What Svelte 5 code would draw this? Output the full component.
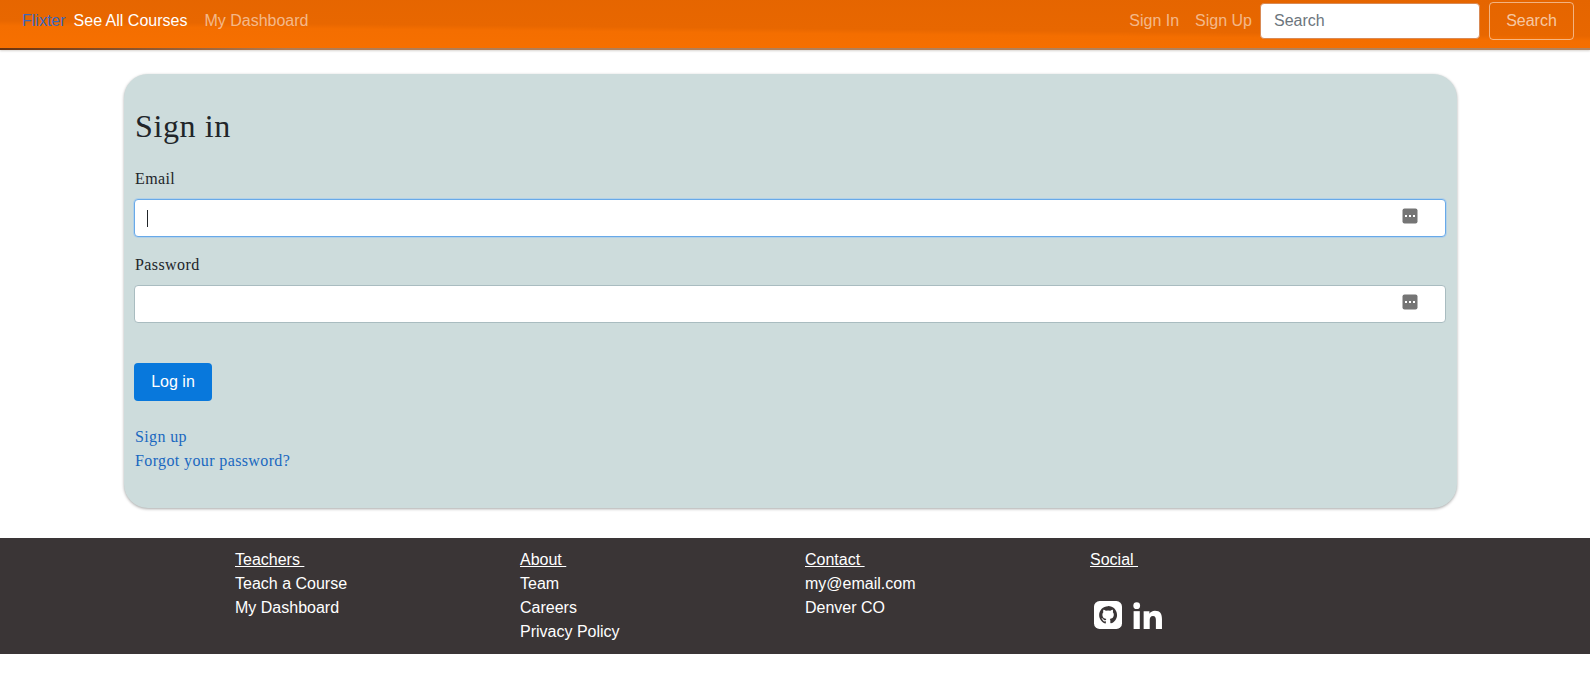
<script lang="ts">
	/**
	 * Flixter sign-in page: orange nav bar, sign-in card, dark footer.
	 */
	const footerColumns = [
		{ title: 'Teachers', links: ['Teach a Course', 'My Dashboard'] },
		{ title: 'About', links: ['Team', 'Careers', 'Privacy Policy'] },
		{ title: 'Contact', links: ['my@email.com', 'Denver CO'] }
	];
</script>

<nav class="navbar">
	<div class="nav-left">
		<a class="brand" href="#top">Flixter</a>
		<a class="nav-link active" href="#top">See All Courses</a>
		<a class="nav-link" href="#top">My Dashboard</a>
	</div>
	<div class="nav-right">
		<a class="nav-link" href="#top">Sign In</a>
		<a class="nav-link" href="#top">Sign Up</a>
		<input class="search-input" type="text" placeholder="Search" />
		<button class="search-btn">Search</button>
	</div>
</nav>

<main class="card">
	<h2>Sign in</h2>
	<label for="email">Email</label>
	<div class="field focused">
		<span class="caret"></span>
		<svg class="key" viewBox="0 0 16 16" aria-hidden="true">
			<rect x="0.500" y="0.500" width="15" height="15" rx="2" fill="#757575" />
			<rect x="3" y="7" width="2" height="2" fill="#fff" />
			<rect x="7" y="7" width="2" height="2" fill="#fff" />
			<rect x="11" y="7" width="2" height="2" fill="#fff" />
		</svg>
		<input id="email" type="text" />
	</div>
	<label for="password">Password</label>
	<div class="field">
		<svg class="key" viewBox="0 0 16 16" aria-hidden="true">
			<rect x="0.500" y="0.500" width="15" height="15" rx="2" fill="#757575" />
			<rect x="3" y="7" width="2" height="2" fill="#fff" />
			<rect x="7" y="7" width="2" height="2" fill="#fff" />
			<rect x="11" y="7" width="2" height="2" fill="#fff" />
		</svg>
		<input id="password" type="text" />
	</div>
	<button class="login">Log in</button>
	<div class="links">
		<a href="#top">Sign up</a>
		<a href="#top">Forgot your password?</a>
	</div>
</main>

<footer class="footer">
	<div class="footer-inner">
		{#each footerColumns as col}
			<div class="footer-col">
				<div class="footer-title">{col.title}&nbsp;</div>
				{#each col.links as link}
					<div>{link}</div>
				{/each}
			</div>
		{/each}
		<div class="footer-col">
			<div class="footer-title">Social&nbsp;</div>
			<div class="social">
				<svg class="gh" viewBox="0 0 30 30" aria-hidden="true">
					<rect width="30" height="30" rx="6" fill="#fff" />
					<path
						fill="#3a3536"
						d="M15 5.500c-5.300 0-9.500 4.200-9.500 9.500 0 4.200 2.700 7.800 6.500 9 .5.100.7-.2.7-.5v-1.700c-2.600.6-3.200-1.200-3.200-1.200-.4-1.100-1-1.400-1-1.400-.9-.6.100-.6.100-.6.900.100 1.400 1 1.400 1 .8 1.400 2.200 1 2.700.8.100-.6.300-1 .6-1.200-2.100-.2-4.300-1-4.300-4.700 0-1 .4-1.900 1-2.500-.1-.3-.4-1.200.100-2.500 0 0 .8-.3 2.600 1a9 9 0 0 1 4.800 0c1.800-1.300 2.600-1 2.600-1 .5 1.300.2 2.200.1 2.500.6.600 1 1.500 1 2.500 0 3.700-2.200 4.500-4.300 4.700.3.300.6.800.6 1.700v2.500c0 .3.200.6.700.5 3.800-1.200 6.500-4.800 6.500-9 0-5.300-4.200-9.500-9.500-9.500z"
					/>
				</svg>
				<svg class="li" viewBox="0 0 30 28" aria-hidden="true">
					<circle cx="3.800" cy="3.800" r="3.500" fill="#fff" />
					<rect x="0.600" y="9.500" width="6.400" height="18.500" fill="#fff" />
					<path
						fill="#fff"
						d="M11 9.500h6v2.600c1-1.700 3-3.100 5.700-3.100 5.700 0 7.300 3.500 7.300 8.700V28h-6.300v-9.300c0-2.500-.6-4.300-3-4.300-2.600 0-3.400 1.900-3.400 4.300V28H11z"
					/>
				</svg>
			</div>
		</div>
	</div>
</footer>

<style>
	:global(body) {
		margin: 0;
		background: #fff;
		font-family: 'Liberation Sans', Arial, sans-serif;
	}

	.navbar {
		display: flex;
		justify-content: space-between;
		align-items: center;
		box-sizing: border-box;
		height: 50px;
		padding: 0 16px 9px 22px;
		background:
			linear-gradient(90deg, #6b3410, #b07c55 18%, #b08460 100%) bottom / 100% 2px no-repeat,
			linear-gradient(180.55deg, #e56500 0, #e86700 36px, #f46e00 41px, #f77000 100%);
		box-shadow: 0 1px 2px rgba(60, 40, 20, 0.2);
		font-size: 16px;
	}

	.nav-left,
	.nav-right {
		display: flex;
		align-items: center;
	}

	a {
		text-decoration: none;
	}

	.brand {
		color: #3b66b8;
		margin-right: 8px;
	}

	.nav-link {
		color: rgba(255, 255, 255, 0.55);
		margin-right: 16px;
	}

	.nav-link.active {
		color: #fff;
		margin-right: 17px;
	}

	.nav-right .nav-link:nth-child(2) {
		margin-right: 8px;
	}

	.search-input {
		box-sizing: border-box;
		width: 220px;
		height: 36px;
		padding: 0 13px;
		border: 1px solid #d98a55;
		border-radius: 4px;
		font: inherit;
		outline: none;
	}

	.search-input::placeholder {
		color: #6c757d;
		opacity: 1;
	}

	.search-btn {
		box-sizing: border-box;
		width: 85px;
		height: 38px;
		margin-left: 9px;
		background: transparent;
		border: 1px solid rgba(255, 255, 255, 0.5);
		border-radius: 4px;
		color: rgba(255, 255, 255, 0.65);
		font: inherit;
	}

	.card {
		box-sizing: border-box;
		width: 1333px;
		height: 434px;
		margin: 24px 0 30px 124px;
		padding: 30px 11px 0 10px;
		background: #cddcdc;
		border-radius: 24px;
		box-shadow: 0 1px 3px rgba(0, 0, 0, 0.35);
		font-family: 'Liberation Serif', Georgia, serif;
		color: #212529;
	}

	h2 {
		margin: 0 0 19px 1px;
		font-size: 32px;
		font-weight: 400;
		line-height: 44px;
		letter-spacing: 0.6px;
	}

	label {
		display: block;
		margin: 0 0 8px 1px;
		font-size: 16px;
		line-height: 24px;
		letter-spacing: 0.4px;
	}

	.field {
		position: relative;
		box-sizing: border-box;
		height: 38px;
		margin-bottom: 16px;
		background: #fff;
		border: 1px solid #a9bcc0;
		border-radius: 4px;
	}

	.field.focused {
		border-color: #68a9e8;
		box-shadow: 0 0 0 1px rgba(128, 189, 255, 0.35);
	}

	.field input {
		box-sizing: border-box;
		width: 100%;
		height: 100%;
		border: 0;
		background: transparent;
		outline: none;
	}

	.caret {
		position: absolute;
		left: 12px;
		top: 10px;
		width: 1px;
		height: 17px;
		background: #212529;
	}

	.key {
		position: absolute;
		right: 27px;
		top: 8px;
		width: 16px;
		height: 16px;
	}

	.login {
		display: block;
		box-sizing: border-box;
		width: 78px;
		height: 38px;
		margin-top: 40px;
		background: #0878dc;
		border: 0;
		border-radius: 4px;
		color: #fff;
		font-family: 'Liberation Sans', Arial, sans-serif;
		font-size: 16px;
	}

	.links {
		display: flex;
		flex-direction: column;
		margin: 24px 0 0 1px;
		font-size: 16px;
		line-height: 24px;
		letter-spacing: 0.38px;
	}

	.links a {
		color: #1a68c0;
	}

	.footer {
		box-sizing: border-box;
		height: 116px;
		background: #3a3536;
		color: #fff;
		font-size: 16px;
		line-height: 24px;
		padding-top: 10px;
	}

	.footer-inner {
		display: grid;
		grid-template-columns: repeat(4, 285px);
		width: 1140px;
		margin-left: 225px;
	}

	.footer-col {
		padding-left: 10px;
	}

	.footer-title {
		text-decoration: underline;
	}

	.social {
		display: flex;
		align-items: center;
		gap: 11px;
		margin: 29px 0 0 4px;
	}

	.gh {
		width: 28px;
		height: 28px;
	}

	.li {
		width: 29px;
		height: 27px;
	}
</style>
